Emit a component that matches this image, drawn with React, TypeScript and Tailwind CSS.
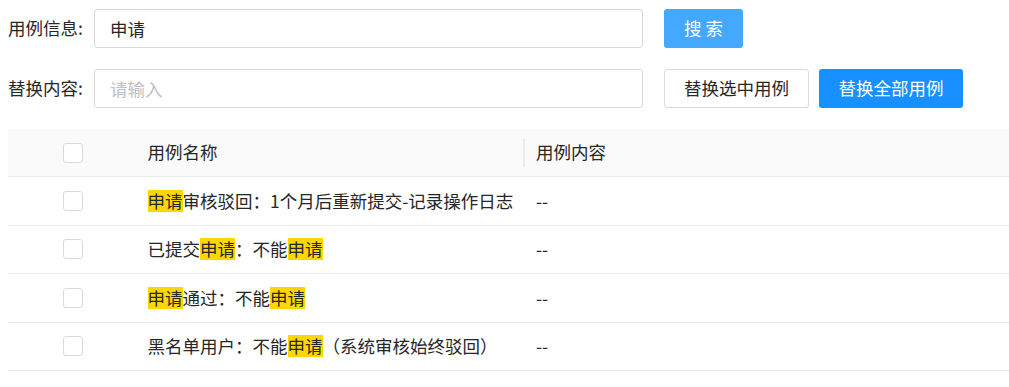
import React from "react";

const rows: { parts: { t: string; hl?: boolean }[]; content: string }[] = [
  {
    parts: [{ t: "申请", hl: true }, { t: "审核驳回：1个月后重新提交-记录操作日志" }],
    content: "--",
  },
  {
    parts: [{ t: "已提交" }, { t: "申请", hl: true }, { t: "：不能" }, { t: "申请", hl: true }],
    content: "--",
  },
  {
    parts: [{ t: "申请", hl: true }, { t: "通过：不能" }, { t: "申请", hl: true }],
    content: "--",
  },
  {
    parts: [
      { t: "黑名单用户：不能" },
      { t: "申请", hl: true },
      { t: "（系统审核始终驳回）" },
    ],
    content: "--",
  },
];

function Checkbox() {
  return <span className="block h-5 w-5 rounded-[3px] border border-[#d9d9d9] bg-white" />;
}

export default function App() {
  return (
    <div
      className="h-[387px] w-[1009px] bg-white text-[17.5px] text-[#262626]"
      style={{ fontFamily: '"Noto Sans CJK SC", "Noto Sans", sans-serif' }}
    >
      {/* search form */}
      <div className="flex flex-col gap-[21px] pt-[9px] pl-2">
        <div className="flex h-[39px] items-center">
          <label className="w-[86px] shrink-0 whitespace-nowrap">用例信息:</label>
          <input
            className="h-[39px] w-[549px] rounded-[3px] border border-[#d9d9d9] px-[15px] outline-none"
            defaultValue="申请"
          />
          <button className="ml-[21px] h-[39px] w-[79px] rounded-[3px] bg-[#45a8ff] text-white">
            搜 索
          </button>
        </div>
        <div className="flex h-[39px] items-center">
          <label className="w-[86px] shrink-0 whitespace-nowrap">替换内容:</label>
          <input
            className="h-[39px] w-[549px] rounded-[3px] border border-[#d9d9d9] px-[15px] outline-none placeholder:text-[#bfbfbf]"
            placeholder="请输入"
          />
          <button className="ml-[21px] h-[39px] w-[145px] rounded-[3px] border border-[#d9d9d9] bg-white">
            替换选中用例
          </button>
          <button className="ml-[10px] h-[39px] w-[144px] rounded-[3px] bg-[#1890ff] text-white">
            替换全部用例
          </button>
        </div>
      </div>

      {/* table */}
      <div className="mt-[21px] ml-2">
        <div className="grid h-[48px] grid-cols-[130px_387px_1fr] items-center border-b border-[#ececec] bg-[#fafafa]">
          <div className="flex justify-center">
            <Checkbox />
          </div>
          <div className="relative pl-[9.5px]">
            用例名称
            <span className="absolute top-1/2 right-0 h-[28px] w-[2px] -translate-y-1/2 bg-[#ececec]" />
          </div>
          <div className="pl-[11px]">用例内容</div>
        </div>
        {rows.map((r, i) => (
          <div
            key={i}
            className="grid h-[48.5px] grid-cols-[130px_387px_1fr] items-center border-b border-[#ececec]"
          >
            <div className="flex justify-center">
              <Checkbox />
            </div>
            <div className="whitespace-nowrap pl-[9.5px]">
              {r.parts.map((p, j) =>
                p.hl ? (
                  <span key={j} className="inline-block h-[22px] bg-[#ffd700] leading-[22px]">
                    {p.t}
                  </span>
                ) : (
                  <span key={j}>{p.t}</span>
                )
              )}
            </div>
            <div className="pl-[11px]">{r.content}</div>
          </div>
        ))}
      </div>
    </div>
  );
}
